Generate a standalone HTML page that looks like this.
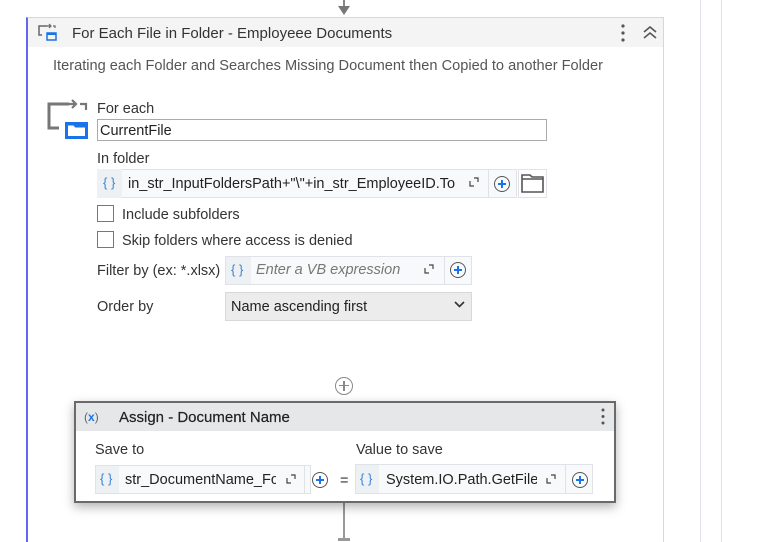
<!DOCTYPE html>
<html style="overflow:hidden;height:542px"><head><meta charset="utf-8"><style>
*{box-sizing:border-box;margin:0;padding:0}
body{width:759px;height:542px;background:#fff;position:relative;overflow:hidden;font-family:"Liberation Sans",sans-serif;font-size:14.5px;color:#333}
.a{position:absolute}
.t{position:absolute;white-space:nowrap;line-height:16px}
.inp{position:absolute;background:#f8f9fa;border:1px solid #dfe2e6}
.br{position:absolute;color:#3b82d6;font-size:13px}
.pl{position:absolute;width:16px;height:16px;border:1.3px solid #555;border-radius:50%}
.pl:before{content:"";position:absolute;left:3px;top:6.3px;width:7.5px;height:1.4px;background:#1a73e8}
.pl:after{content:"";position:absolute;top:3px;left:6.3px;height:7.5px;width:1.4px;background:#1a73e8}
.ex{position:absolute;width:10px;height:10px}
.cb{position:absolute;width:17px;height:17px;border:1px solid #777;background:#fff}
</style></head><body>
<div class="a" style="left:700px;top:0;width:1px;height:542px;background:#dfe2e6"></div>
<div class="a" style="left:721px;top:0;width:1px;height:542px;background:#dfe2e6"></div>
<div class="a" style="left:343px;top:0;width:2px;height:8px;background:#888"></div>
<svg class="a" style="left:338px;top:6px" width="12" height="10"><path d="M0 0 L12 0 L6 9Z" fill="#777"/></svg>
<div class="a" style="left:26px;top:17px;width:638px;height:525px;border:1px solid #d3d8de;border-bottom:none;border-left:2px solid #6466f1"></div>
<div class="a" style="left:28px;top:18px;width:635px;height:29px;background:#f4f4f4"></div>
<svg class="a" style="left:38px;top:23px" width="22" height="18"><path d="M9 3H1V12H4" stroke="#666" stroke-width="1.5" fill="none"/><path d="M9 3h4M11 1l2 2-2 2M15 3h2v2" stroke="#666" stroke-width="1.2" fill="none"/><rect x="9" y="10" width="9" height="7" fill="none" stroke="#1a73e8" stroke-width="1.5"/><path d="M9 11h9" stroke="#1a73e8" stroke-width="2"/></svg>
<div class="t" style="left:72px;top:26px;font-size:15px;color:#333">For Each File in Folder - Employeee Documents</div>
<svg class="a" style="left:619px;top:23px" width="8" height="20"><circle cx="4" cy="3" r="1.6" fill="#555"/><circle cx="4" cy="10" r="1.6" fill="#555"/><circle cx="4" cy="17" r="1.6" fill="#555"/></svg>
<svg class="a" style="left:643px;top:26px" width="14" height="14"><path d="M1 6l6-5 6 5M1 12l6-5 6 5" stroke="#555" stroke-width="1.6" fill="none"/></svg>
<div class="t" style="left:53px;top:58px;color:#555;font-size:14.6px">Iterating each Folder and Searches Missing Document then Copied to another Folder</div>
<svg class="a" style="left:46px;top:99px" width="44" height="40"><path d="M23 5H3V29H13" stroke="#777" stroke-width="3" fill="none"/><path d="M21 5h8M26 1l4 4-4 4" stroke="#777" stroke-width="2.2" fill="none"/><path d="M34 5h6v6" stroke="#777" stroke-width="2.2" fill="none"/><rect x="20.5" y="24.5" width="20" height="14" fill="none" stroke="#1a73e8" stroke-width="3"/><path d="M20 25h8l2 2h10" stroke="#1a73e8" stroke-width="3" fill="none"/></svg>
<div class="t" style="left:97px;top:101px">For each</div>
<div class="a" style="left:97px;top:119px;width:450px;height:22px;border:1px solid #aaa;background:#fff"></div>
<div class="t" style="left:100px;top:123px;color:#222">CurrentFile</div>
<div class="t" style="left:97px;top:151px">In folder</div>
<div class="inp" style="left:97px;top:169px;width:420px;height:29px"></div>
<div class="a" style="left:97px;top:169px;width:25px;height:29px;background:#eef1f4"></div>
<div class="br" style="left:103px;top:175px">{ }</div>
<div class="t" style="left:128px;top:176px;color:#222;width:330px;overflow:hidden">in_str_InputFoldersPath+"\"+in_str_EmployeeID.To</div>
<svg class="ex" style="left:469px;top:177px"><path d="M1 4v5h4M5 1h4v4" stroke="#444" stroke-width="1.2" fill="none"/></svg>
<div class="a" style="left:488px;top:169px;width:1px;height:29px;background:#dfe2e6"></div>
<div class="pl" style="left:494px;top:176px"></div>
<div class="a" style="left:518px;top:169px;width:29px;height:29px;border:1px solid #dfe2e6;background:#fff"></div>
<svg class="a" style="left:521px;top:174px" width="24" height="20"><path d="M1 1h8l2 2h11v15H1Z" stroke="#555" stroke-width="1.6" fill="none"/><path d="M1 5h21" stroke="#555" stroke-width="1.4"/></svg>
<div class="cb" style="left:97px;top:205px"></div>
<div class="t" style="left:122px;top:207px">Include subfolders</div>
<div class="cb" style="left:97px;top:231px"></div>
<div class="t" style="left:122px;top:233px">Skip folders where access is denied</div>
<div class="t" style="left:97px;top:263px">Filter by (ex: *.xlsx)</div>
<div class="inp" style="left:225px;top:256px;width:247px;height:29px"></div>
<div class="a" style="left:226px;top:257px;width:25px;height:27px;background:#eef1f4"></div>
<div class="br" style="left:231px;top:262px">{ }</div>
<div class="t" style="left:256px;top:262px;color:#777;font-style:italic">Enter a VB expression</div>
<svg class="ex" style="left:424px;top:264px"><path d="M1 4v5h4M5 1h4v4" stroke="#444" stroke-width="1.2" fill="none"/></svg>
<div class="a" style="left:444px;top:256px;width:1px;height:29px;background:#dfe2e6"></div>
<div class="pl" style="left:450px;top:262px"></div>
<div class="a" style="left:225px;top:292px;width:247px;height:29px;background:#ececec;border:1px solid #d8d8d8"></div>
<div class="t" style="left:231px;top:299px;color:#222">Name ascending first</div>
<svg class="a" style="left:454px;top:301px" width="11" height="8"><path d="M1 1l4.5 4.5L10 1" stroke="#333" stroke-width="1.6" fill="none"/></svg>
<div class="t" style="left:97px;top:299px">Order by</div>
<div class="a" style="left:335px;top:377px;width:18px;height:18px;border:1.3px solid #888;border-radius:50%"></div>
<div class="a" style="left:339px;top:385px;width:10px;height:1.3px;background:#888"></div>
<div class="a" style="left:343.4px;top:381px;width:1.3px;height:10px;background:#888"></div>
<div class="a" style="left:343px;top:502px;width:2px;height:36px;background:#999"></div>
<div class="a" style="left:338px;top:538px;width:12px;height:3px;background:#999"></div>
<div class="a" style="left:74px;top:401px;width:542px;height:102px;border:2px solid #6a6a6a;background:#fff;box-shadow:0 4px 10px rgba(0,0,0,.3)"></div>
<div class="a" style="left:76px;top:403px;width:538px;height:28px;background:#e6e7e8"></div>
<div class="t" style="left:84px;top:409px;font-size:12px;color:#666">(<b style="color:#1a73e8">x</b>)</div>
<div class="t" style="left:119px;top:410px;font-size:15px;color:#222;-webkit-text-stroke:0.2px #222">Assign - Document Name</div>
<svg class="a" style="left:599px;top:407px" width="8" height="20"><circle cx="4" cy="3" r="1.5" fill="#555"/><circle cx="4" cy="9.5" r="1.5" fill="#555"/><circle cx="4" cy="16" r="1.5" fill="#555"/></svg>
<div class="t" style="left:95px;top:442px">Save to</div>
<div class="t" style="left:356px;top:442px">Value to save</div>
<div class="inp" style="left:95px;top:465px;width:216px;height:29px"></div>
<div class="a" style="left:96px;top:466px;width:23px;height:27px;background:#eef1f4"></div>
<div class="br" style="left:100px;top:471px">{ }</div>
<div class="t" style="left:125px;top:472px;color:#222;width:151px;overflow:hidden">str_DocumentName_Fo</div>
<svg class="ex" style="left:286px;top:474px"><path d="M1 4v5h4M5 1h4v4" stroke="#444" stroke-width="1.2" fill="none"/></svg>
<div class="a" style="left:304px;top:465px;width:1px;height:29px;background:#dfe2e6"></div>
<div class="pl" style="left:312px;top:472px"></div>
<div class="t" style="left:340px;top:473px">=</div>
<div class="inp" style="left:355px;top:464px;width:238px;height:30px"></div>
<div class="a" style="left:356px;top:465px;width:23px;height:28px;background:#eef1f4"></div>
<div class="br" style="left:360px;top:471px">{ }</div>
<div class="t" style="left:386px;top:472px;color:#222;width:151px;overflow:hidden">System.IO.Path.GetFileN</div>
<svg class="ex" style="left:546px;top:474px"><path d="M1 4v5h4M5 1h4v4" stroke="#444" stroke-width="1.2" fill="none"/></svg>
<div class="a" style="left:565px;top:464px;width:1px;height:30px;background:#dfe2e6"></div>
<div class="pl" style="left:572px;top:472px"></div>
</body></html>
